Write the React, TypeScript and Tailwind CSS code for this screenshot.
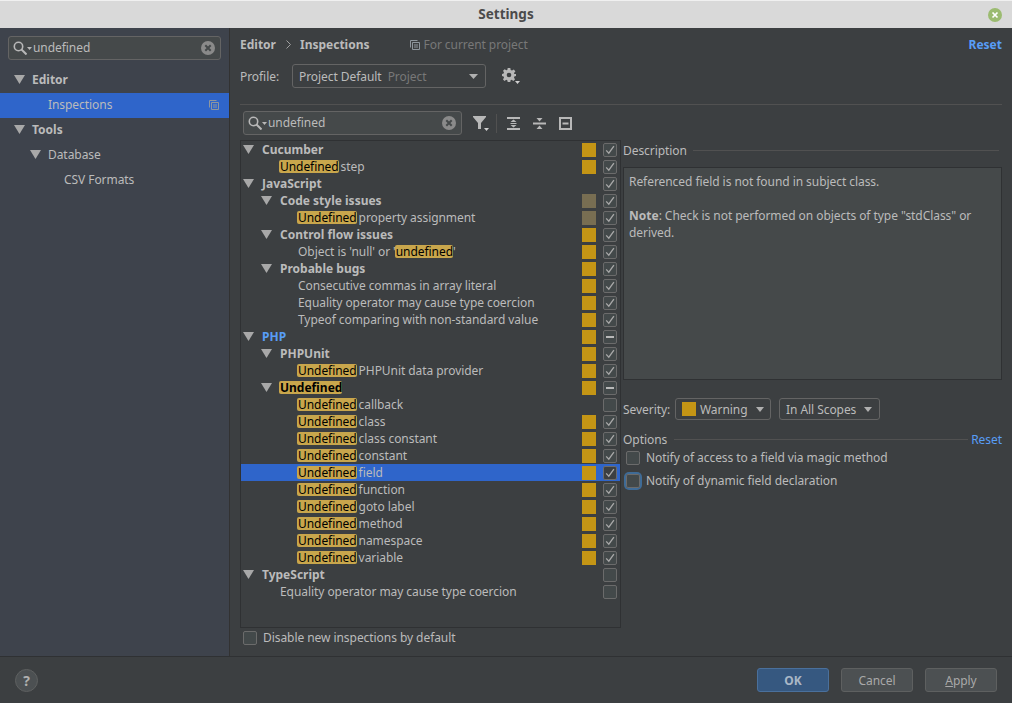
import React from "react";

const Chevron = ({ className = "" }: { className?: string }) => (
  <svg width="11" height="9" viewBox="0 0 11 9" className={`shrink-0 ${className}`}>
    <path d="M0 0H11L5.5 9Z" fill="#a8a8a8" />
  </svg>
);

const Caret = ({ w = 11 }: { w?: number }) => (
  <svg width={w} height="5" viewBox="0 0 11 6" preserveAspectRatio="none" className="shrink-0">
    <path d="M0 0H11L5.5 6Z" fill="#b0b0b0" />
  </svg>
);

const Check = () => (
  <svg width="10" height="10" viewBox="0 0 10 10">
    <path d="M1.2 5.4L3.8 8.2L8.9 1.2" stroke="#a8a8a8" strokeWidth="1.3" fill="none" />
  </svg>
);

const Box = ({ state, selected }: { state: "on" | "off" | "mixed"; selected?: boolean }) => (
  <span
    className={`flex h-[14px] w-[14px] items-center justify-center rounded-[2px] border border-[#6b6b6b] ${
      selected ? "bg-[#3c3f41]" : "bg-[#43494a]"
    }`}
  >
    {state === "on" && <Check />}
    {state === "mixed" && <span className="h-[2px] w-[8px] bg-[#b8b8b8]" />}
  </span>
);

const Copy = () => (
  <svg width="10" height="10" viewBox="0 0 10 10" className="shrink-0">
    <path d="M.5 7.5V.5H7.5M2.5 2.5H9.5V9.5H2.5ZM4 5H8M4 7H8" stroke="#8f979e" strokeWidth="1" fill="none" />
  </svg>
);

const Mag = () => (
  <span className="flex shrink-0 items-center">
    <svg width="14" height="14" viewBox="0 0 14 14">
      <circle cx="5.5" cy="5.5" r="4.2" stroke="#b8b8b8" strokeWidth="1.6" fill="none" />
      <path d="M8.5 8.5L13.5 13.5" stroke="#b8b8b8" strokeWidth="2" />
    </svg>
    <svg width="5" height="3" viewBox="0 0 5 3">
      <path d="M0 0H5L2.5 3Z" fill="#b8b8b8" />
    </svg>
  </span>
);

const Clear = () => (
  <svg width="14" height="14" viewBox="0 0 14 14" className="shrink-0">
    <circle cx="7" cy="7" r="7" fill="#8a8a8a" />
    <path d="M4.3 4.3L9.7 9.7M9.7 4.3L4.3 9.7" stroke="#45494a" strokeWidth="2" />
  </svg>
);

const Search = ({ className }: { className: string }) => (
  <div className={`flex h-[24px] items-center rounded-[3px] border border-[#646464] bg-[#45494a] pl-[4px] pr-[5px] ${className}`}>
    <Mag />
    <span className="ml-[1px] flex-1 pb-[2px] text-[#bbbbbb]">undefined</span>
    <Clear />
  </div>
);

const Hl = ({ children, bold }: { children: React.ReactNode; bold?: boolean }) => (
  <span className={`-ml-[1px] inline-block h-[13px] rounded-[2px] bg-[#c8a64c] pl-[1px] leading-[13px] text-[#000000] ${bold ? "font-bold tracking-normal" : ""}`}>
    {children}
  </span>
);

type Row = {
  level: number;
  text?: React.ReactNode;
  hl?: boolean;
  rest?: string;
  arrow?: boolean;
  bold?: boolean;
  swatch?: "warn" | "weak" | "none";
  state?: "on" | "off" | "mixed";
  color?: string;
  selected?: boolean;
};

const rows: Row[] = [
  { level: 0, arrow: true, bold: true, text: "Cucumber" },
  { level: 1, hl: true, rest: "step" },
  { level: 0, arrow: true, bold: true, text: "JavaScript", swatch: "none" },
  { level: 1, arrow: true, bold: true, text: "Code style issues", swatch: "weak" },
  { level: 2, hl: true, rest: "property assignment", swatch: "weak" },
  { level: 1, arrow: true, bold: true, text: "Control flow issues" },
  { level: 2, text: <>Object is 'null' or '<Hl>undefined</Hl>'</> },
  { level: 1, arrow: true, bold: true, text: "Probable bugs" },
  { level: 2, text: "Consecutive commas in array literal" },
  { level: 2, text: "Equality operator may cause type coercion" },
  { level: 2, text: "Typeof comparing with non-standard value" },
  { level: 0, arrow: true, bold: true, text: "PHP", color: "text-[#589df6]", state: "mixed" },
  { level: 1, arrow: true, bold: true, text: "PHPUnit" },
  { level: 2, hl: true, rest: "PHPUnit data provider" },
  { level: 1, arrow: true, text: <Hl bold>Undefined</Hl>, state: "mixed" },
  { level: 2, hl: true, rest: "callback", swatch: "none", state: "off" },
  { level: 2, hl: true, rest: "class" },
  { level: 2, hl: true, rest: "class constant" },
  { level: 2, hl: true, rest: "constant" },
  { level: 2, hl: true, rest: "field", selected: true },
  { level: 2, hl: true, rest: "function" },
  { level: 2, hl: true, rest: "goto label" },
  { level: 2, hl: true, rest: "method" },
  { level: 2, hl: true, rest: "namespace" },
  { level: 2, hl: true, rest: "variable" },
  { level: 0, arrow: true, bold: true, text: "TypeScript", swatch: "none", state: "off" },
  { level: 1, text: "Equality operator may cause type coercion", swatch: "none", state: "off" },
];

const TreeRow = ({ r }: { r: Row }) => {
  const pad = r.level === 0 ? "pl-[2px]" : r.level === 1 ? "pl-[20px]" : "pl-[38px]";
  return (
    <div className={`flex h-[17px] items-center ${r.selected ? "bg-[#2f65ca]" : ""}`}>
      <div className={`flex min-w-0 flex-1 items-center whitespace-pre ${pad}`}>
        {r.arrow && <Chevron className="mr-[8px]" />}
        {!r.arrow && <span className="ml-[19px]" />}
        <span className={`${r.bold ? "font-bold tracking-normal" : ""} ${r.color ?? "text-[#bbbbbb]"}`}>
          {r.hl ? (
            <>
              <Hl>Undefined</Hl>
              <span className="ml-[2px]">{r.rest}</span>
            </>
          ) : (
            r.text
          )}
        </span>
      </div>
      {r.swatch === "none" ? (
        <span className="h-[14px] w-[14px] shrink-0" />
      ) : (
        <span className={`h-[14px] w-[14px] shrink-0 ${r.swatch === "weak" ? "bg-[#786e52]" : "bg-[#c49515]"}`} />
      )}
      <span className="ml-[7px] mr-[3px] shrink-0">
        <Box state={r.state ?? "on"} selected={r.selected} />
      </span>
    </div>
  );
};

const Combo = ({ children, className }: { children: React.ReactNode; className: string }) => (
  <div className={`flex items-center rounded-[3px] border border-[#646464] bg-[#3c3f41] ${className}`}>{children}</div>
);

const Btn = ({ children, primary }: { children: React.ReactNode; primary?: boolean }) => (
  <div
    className={`flex h-[24px] w-[72px] items-center justify-center rounded-[3px] border ${
      primary
        ? "border-[#4a709c] bg-[#365880] font-bold tracking-normal text-[#a9b7c6]"
        : "border-[#5e6060] bg-[#4c5052] text-[#a9a9a9]"
    }`}
  >
    {children}
  </div>
);

const Gear = () => (
  <span className="relative block h-[16px] w-[18px]">
    <svg width="14" height="14" viewBox="0 0 14 14" className="absolute left-0 top-0">
      <path
        d="M5.7 0H8.3L8.7 2 10 2.6 11.9 1.5 13.4 3.5 12 5 12.3 6 14 6V8L12.3 8.6 12 9.6 13 11.5 11.3 13 9.7 11.7 8.6 12.2 8.3 14H5.7L5.3 12.2 4.2 11.7 2.6 13 1 11.4 2 9.6 1.6 8.6 0 8V6L1.6 5.6 2 4.5 1 2.8 2.7 1.2 4.3 2.3 5.3 1.9Z"
        fill="#b8b8b8"
      />
      <circle cx="7" cy="7" r="2.3" fill="#3c3f41" />
    </svg>
    <svg width="5" height="3" viewBox="0 0 5 3" className="absolute bottom-0 right-0">
      <path d="M0 0H5L2.5 3Z" fill="#d0d0d0" />
    </svg>
  </span>
);

export default function App() {
  return (
    <div className="flex h-[703px] w-[1012px] flex-col overflow-hidden bg-[#3c3f41] font-['Noto_Sans',sans-serif] text-[12px] leading-[17px] tracking-[-0.06px] text-[#bbbbbb]">
      {/* Title bar */}
      <div className="flex h-[28px] shrink-0 items-center border-t border-[#f0f0f0] bg-[#d9d9d9] pl-[24px] pr-[10px]">
        <span className="flex-1 text-center text-[13.5px] font-bold tracking-normal text-[#4b4b4b]">Settings</span>
        <span className="flex h-[14px] w-[14px] items-center justify-center rounded-full bg-[#9bbb70]">
          <svg width="8" height="8" viewBox="0 0 8 8">
            <path d="M1.5 1.5L6.5 6.5M6.5 1.5L1.5 6.5" stroke="#ffffff" strokeWidth="1.7" />
          </svg>
        </span>
      </div>

      <div className="flex min-h-0 flex-1 border-b border-[#2f3133]">
        {/* Sidebar */}
        <aside className="flex w-[230px] shrink-0 flex-col border-r border-[#323232] bg-[#3e434c] pt-[8px]">
          <Search className="mx-[8px] w-[213px]" />
          <div className="mt-[8px]">
            <div className="flex h-[25px] items-center pb-[2px] pl-[14px] font-bold tracking-normal">
              <Chevron className="mr-[7px]" />
              <span>Editor</span>
            </div>
            <div className="flex h-[25px] items-center bg-[#2f65ca] pb-[2px] pl-[48px] pr-[10px]">
              <span className="flex-1">Inspections</span>
              <Copy />
            </div>
            <div className="flex h-[25px] items-center pb-[2px] pl-[14px] font-bold tracking-normal">
              <Chevron className="mr-[7px]" />
              <span>Tools</span>
            </div>
            <div className="flex h-[25px] items-center pb-[2px] pl-[30px]">
              <Chevron className="mr-[7px]" />
              <span>Database</span>
            </div>
            <div className="flex h-[25px] items-center pb-[2px] pl-[64px]">CSV Formats</div>
          </div>
        </aside>

        {/* Main */}
        <main className="flex min-w-0 flex-1 flex-col pl-[10px] pr-[10px]">
          <div className="mt-[8px] flex h-[17px] items-center">
            <span className="font-bold tracking-normal">Editor</span>
            <svg width="5" height="9" viewBox="0 0 5 9" className="ml-[10px] mr-[9px]">
              <path d="M.5.5L4.5 4.5L.5 8.5" stroke="#a0a0a0" fill="none" />
            </svg>
            <span className="font-bold tracking-normal">Inspections</span>
            <span className="ml-[40px]"><Copy /></span>
            <span className="ml-[4px] text-[#787878]">For current project</span>
            <span className="flex-1" />
            <span className="font-bold tracking-normal text-[#589df6]">Reset</span>
          </div>

          <div className="mt-[11px] flex h-[24px] items-center">
            <span className="w-[52px]">Profile:</span>
            <Combo className="h-[24px] w-[194px] pl-[6px] pr-[7px]">
              <span>Project Default</span>
              <span className="ml-[6px] flex-1 text-[#787878]">Project</span>
              <Caret w={9} />
            </Combo>
            <span className="ml-[16px]"><Gear /></span>
          </div>

          <div className="mt-[16px] h-[1px] bg-[#515151]" />

          <div className="mt-[6px] flex h-[24px] items-center pl-[3px]">
            <Search className="w-[219px]" />
            <span className="relative ml-[11px] block h-[16px] w-[16px]">
              <svg width="14" height="14" viewBox="0 0 14 14" className="absolute left-0 top-[1px]">
                <path d="M0 0H13V1L8 7V13H5V7L0 1Z" fill="#b8b8b8" />
              </svg>
              <svg width="5" height="3" viewBox="0 0 5 3" className="absolute bottom-0 right-0">
                <path d="M0 0H5L2.5 3Z" fill="#d0d0d0" />
              </svg>
            </span>
            <span className="ml-[7px] h-[19px] w-[1px] bg-[#515151]" />
            <svg width="13" height="13" viewBox="0 0 13 13" className="ml-[10px]">
              <path d="M0 1H13M0 12H13" stroke="#b8b8b8" strokeWidth="2" />
              <path d="M3.5 5L6.5 2.5L9.5 5ZM3.5 8L6.5 10.5L9.5 8Z M3.5 6H9.5V7H3.5Z" fill="#b8b8b8" />
            </svg>
            <svg width="13" height="13" viewBox="0 0 13 13" className="ml-[13px]">
              <path d="M0 6.5H13" stroke="#b8b8b8" strokeWidth="2" />
              <path d="M3.5 1H9.5L6.5 4.5ZM3.5 12H9.5L6.5 8.5Z" fill="#b8b8b8" />
            </svg>
            <svg width="13" height="13" viewBox="0 0 13 13" className="ml-[13px]">
              <rect x="1" y="1" width="11" height="11" stroke="#b8b8b8" strokeWidth="2" fill="none" />
              <path d="M3.5 6.5H9.5" stroke="#b8b8b8" strokeWidth="2" />
            </svg>
          </div>

          <div className="mt-[5px] flex min-h-0 flex-1">
            {/* Tree */}
            <div className="flex w-[381px] shrink-0 flex-col">
              <div className="h-[488px] border border-[#2f3133]">
                {rows.map((r, i) => (
                  <TreeRow key={i} r={r} />
                ))}
              </div>
              <div className="mt-[1px] flex h-[17px] items-center pl-[3px]">
                <Box state="off" />
                <span className="ml-[6px]">Disable new inspections by default</span>
              </div>
            </div>

            {/* Right */}
            <div className="ml-[2px] flex min-w-0 flex-1 flex-col">
              <div className="flex h-[19px] items-center pt-[1px]">
                <span>Description</span>
                <span className="ml-[6px] mr-[3px] h-[1px] flex-1 bg-[#515151]" />
              </div>
              <div className="mt-[8px] h-[213px] border border-[#2f3133] bg-[#45494a] px-[5px] pt-[5px]">
                <p>Referenced field is not found in subject class.</p>
                <p className="mt-[17px]">
                  <b className="font-bold tracking-normal">Note</b>: Check is not performed on objects of type "stdClass" or derived.
                </p>
              </div>
              <div className="flex h-[4px] justify-center pt-[1px]">
                <span className="h-[3px] w-[14px] bg-[radial-gradient(#a0a0a0_0.5px,transparent_0.6px)] bg-[length:2px_2px]" />
              </div>
              <div className="mt-[14px] flex h-[22px] items-center">
                <span className="w-[52px]">Severity:</span>
                <Combo className="h-[22px] w-[96px] pl-[6px] pr-[6px]">
                  <span className="h-[14px] w-[14px] shrink-0 bg-[#c49515]" />
                  <span className="ml-[4px] flex-1">Warning</span>
                  <Caret w={8} />
                </Combo>
                <Combo className="ml-[8px] h-[22px] w-[101px] pl-[6px] pr-[7px]">
                  <span className="flex-1">In All Scopes</span>
                  <Caret w={8} />
                </Combo>
              </div>
              <div className="mt-[11px] flex h-[17px] items-center">
                <span>Options</span>
                <span className="ml-[7px] mr-[3px] h-[1px] flex-1 bg-[#515151]" />
                <span className="text-[#589df6]">Reset</span>
              </div>
              <div className="mt-[1px] flex h-[17px] items-center pl-[3px]">
                <Box state="off" />
                <span className="ml-[6px]">Notify of access to a field via magic method</span>
              </div>
              <div className="mt-[6px] flex h-[17px] items-center pl-[3px]">
                <span className="rounded-[3px] shadow-[0_0_0_2px_#3f6b96]">
                  <Box state="off" />
                </span>
                <span className="ml-[6px]">Notify of dynamic field declaration</span>
              </div>
            </div>
          </div>
        </main>
      </div>

      {/* Footer */}
      <footer className="flex h-[46px] shrink-0 items-center pl-[15px] pr-[15px]">
        <span className="flex h-[23px] w-[23px] items-center justify-center rounded-full border border-[#5e6060] bg-[#4c5052] text-[14px] font-bold text-[#b0b0b0]">?</span>
        <span className="flex-1" />
        <div className="flex gap-[12px]">
          <Btn primary>OK</Btn>
          <Btn>Cancel</Btn>
          <Btn><span><u>A</u>pply</span></Btn>
        </div>
      </footer>
    </div>
  );
}
